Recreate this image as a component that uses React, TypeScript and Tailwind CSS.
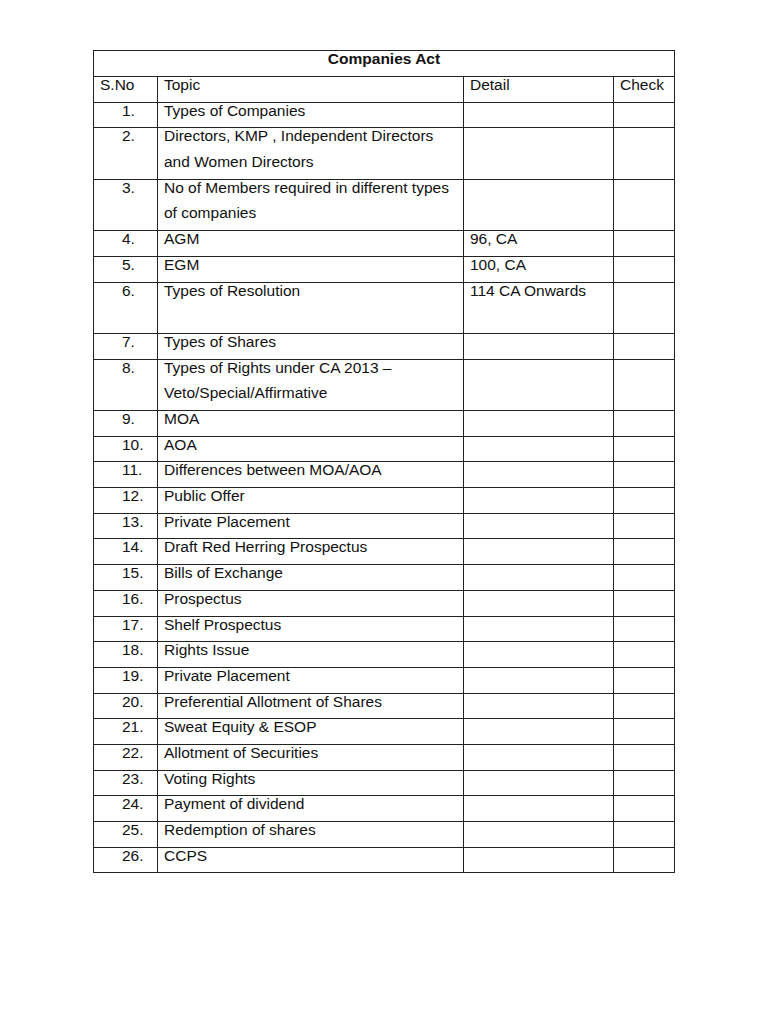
const rows: { n: string; topic: string[]; detail?: string; tall?: boolean }[] = [
  { n: '1.', topic: ['Types of Companies'] },
  { n: '2.', topic: ['Directors, KMP , Independent Directors', 'and Women Directors'], tall: true },
  { n: '3.', topic: ['No of Members required in different types', 'of companies'], tall: true },
  { n: '4.', topic: ['AGM'], detail: '96, CA' },
  { n: '5.', topic: ['EGM'], detail: '100, CA' },
  { n: '6.', topic: ['Types of Resolution'], detail: '114 CA Onwards', tall: true },
  { n: '7.', topic: ['Types of Shares'] },
  { n: '8.', topic: ['Types of Rights under CA 2013 \u2013', 'Veto/Special/Affirmative'], tall: true },
  { n: '9.', topic: ['MOA'] },
  { n: '10.', topic: ['AOA'] },
  { n: '11.', topic: ['Differences between MOA/AOA'] },
  { n: '12.', topic: ['Public Offer'] },
  { n: '13.', topic: ['Private Placement'] },
  { n: '14.', topic: ['Draft Red Herring Prospectus'] },
  { n: '15.', topic: ['Bills of Exchange'] },
  { n: '16.', topic: ['Prospectus'] },
  { n: '17.', topic: ['Shelf Prospectus'] },
  { n: '18.', topic: ['Rights Issue'] },
  { n: '19.', topic: ['Private Placement'] },
  { n: '20.', topic: ['Preferential Allotment of Shares'] },
  { n: '21.', topic: ['Sweat Equity & ESOP'] },
  { n: '22.', topic: ['Allotment of Securities'] },
  { n: '23.', topic: ['Voting Rights'] },
  { n: '24.', topic: ['Payment of dividend'] },
  { n: '25.', topic: ['Redemption of shares'] },
  { n: '26.', topic: ['CCPS'] },
];

const cell = 'border-r border-b border-[#222] leading-[25.7px]';

export default function App() {
  return (
    <div className="min-h-[1024px] bg-white pt-[50px] pl-[93px] text-[15.5px] text-[#111]" style={{ fontFamily: '"Liberation Sans", Arial, sans-serif' }}>
      <div className="w-[582px] border-l border-t border-[#222]">
        <div className="flow-root h-[26px] border-r border-b border-[#222] text-center font-bold leading-[25.7px]">
          <div className="-mt-[5px]">Companies Act</div>
        </div>
        <div className="grid grid-cols-[64px_306px_150px_61px]">
          <div className={`${cell} h-[25.7px] pl-[6px]`}><div className="-mt-[5px]">S.No</div></div>
          <div className={`${cell} h-[25.7px] pl-[6px]`}><div className="-mt-[5px]">Topic</div></div>
          <div className={`${cell} h-[25.7px] pl-[6px]`}><div className="-mt-[5px]">Detail</div></div>
          <div className={`${cell} h-[25.7px] pl-[6px]`}><div className="-mt-[5px]">Check</div></div>
          {rows.map((r) => {
            const h = r.tall ? 'h-[51.4px]' : 'h-[25.7px]';
            return [
              <div key={r.n + 'a'} className={`${cell} ${h} pl-[28px]`}><div className="-mt-[5px]">{r.n}</div></div>,
              <div key={r.n + 'b'} className={`${cell} ${h} pl-[6px]`}>
                <div className="-mt-[5px]">
                  {r.topic.map((t) => (
                    <div key={t}>{t}</div>
                  ))}
                </div>
              </div>,
              <div key={r.n + 'c'} className={`${cell} ${h} pl-[6px]`}><div className="-mt-[5px]">{r.detail}</div></div>,
              <div key={r.n + 'd'} className={`${cell} ${h}`}></div>,
            ];
          })}
        </div>
      </div>
    </div>
  );
}
